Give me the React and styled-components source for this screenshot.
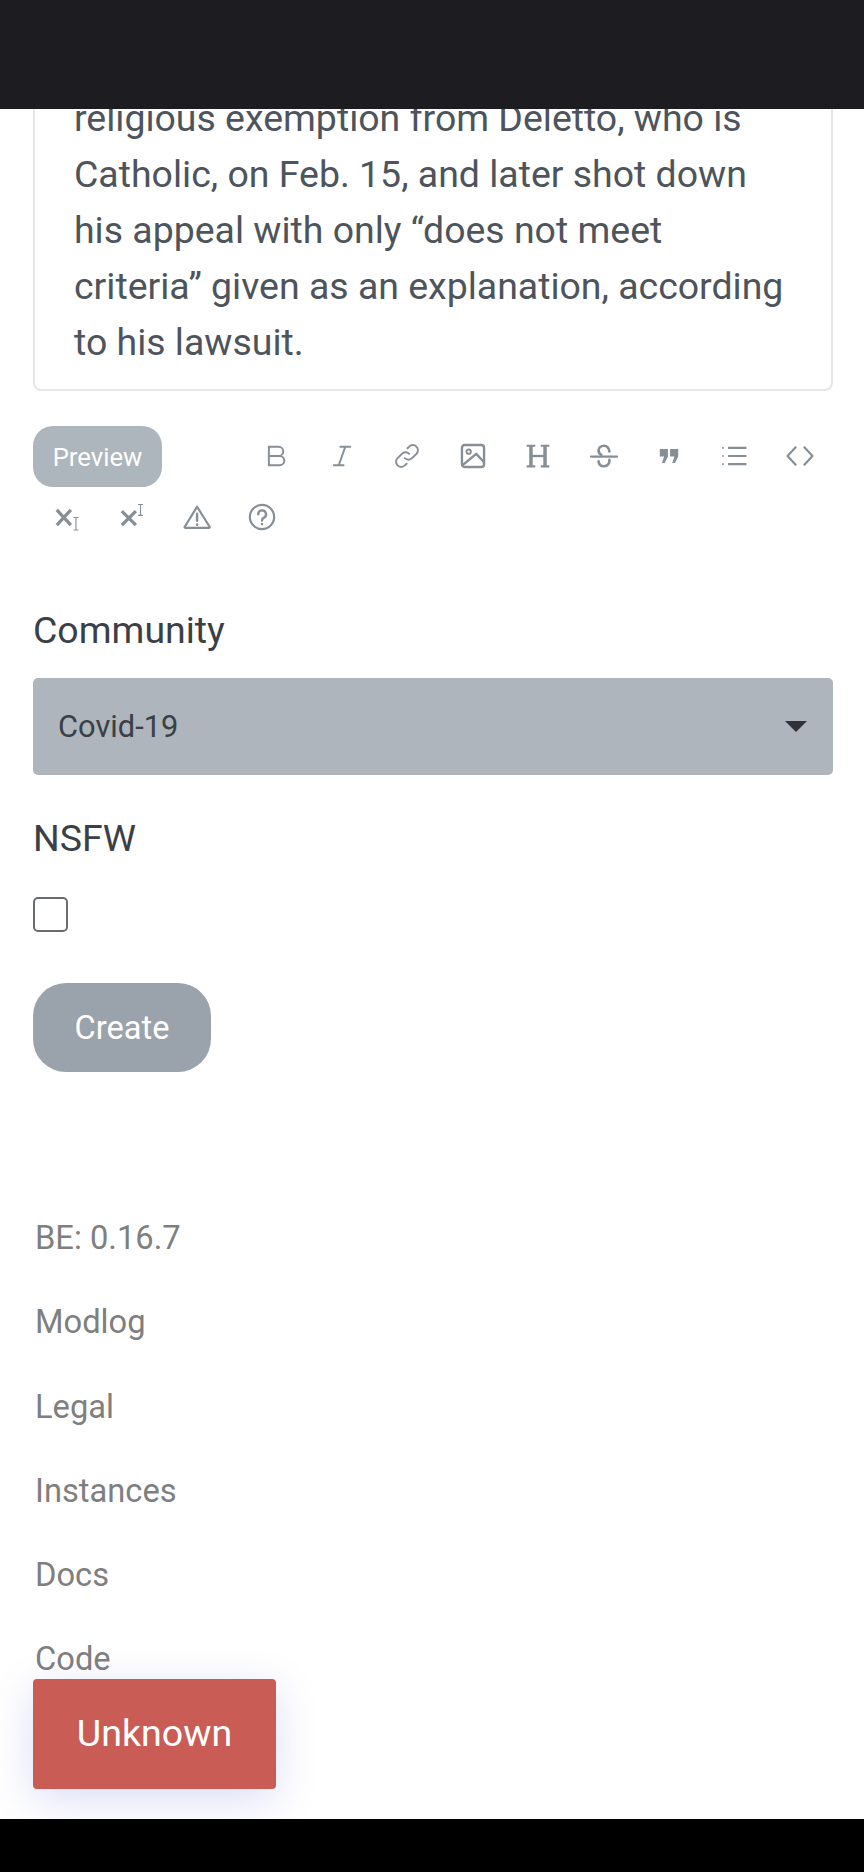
import React from 'react';
import styled, { createGlobalStyle } from 'styled-components';

const GlobalStyle = createGlobalStyle`
  html, body {
    margin: 0;
    padding: 0;
    background: #fff;
  }

  * {
    box-sizing: border-box;
  }
`

const Phone = styled.div`
  display: flex;
  flex-direction: column;
  width: 864px;
  height: 1872px;
  overflow: hidden;
  font-family: Roboto, "Liberation Sans", sans-serif;
`

const StatusBar = styled.div`
  flex: 0 0 109px;
  background: #1c1c21;
`

const NavBar = styled.div`
  flex: 0 0 53px;
  background: #000;
`

const Viewport = styled.main`
  position: relative;
  flex: 1;
  overflow: hidden;
  background: #fff;
`

const Scrolled = styled.div`
  margin-top: -20px;
  padding: 0 31px 0 33px;
`

const Card = styled.div`
  padding: 1px 30px 19px 39px;
  border: 2px solid #e4e6e8;
  border-top: 0;
  border-radius: 0 0 8px 8px;
  color: #4d545b;
  font-size: 37.45px;
  line-height: 56px;
  white-space: nowrap;
`

const Toolbar = styled.div`
  display: flex;
  flex-wrap: wrap;
  align-items: flex-start;
  margin-top: 35px;
`

const PreviewButton = styled.button`
  width: 129px;
  height: 61px;
  margin-right: 82px;
  padding: 0;
  border: 0;
  border-radius: 20px;
  background: #adb5bd;
  color: #fff;
  font-family: inherit;
  font-size: 25.7px;
`

const ToolButton = styled.button`
  display: flex;
  align-items: center;
  justify-content: center;
  width: 65.4px;
  height: 60px;
  padding: 0;
  border: 0;
  background: transparent;
  color: #868e96;

  svg {
    display: block;
    width: 26px;
    height: 26px;
    overflow: visible;
    fill: none;
    stroke: currentColor;
    stroke-width: 1.8;
    stroke-linecap: round;
    stroke-linejoin: round;
  }
`

const Label = styled.label`
  display: block;
  margin-top: ${(p) => p.$top}px;
  color: #3a4046;
  font-size: 37.45px;
  line-height: 50px;
`

const Select = styled.div`
  display: flex;
  align-items: center;
  justify-content: space-between;
  height: 97px;
  margin-top: 23px;
  padding: 0 26px 0 25px;
  border-radius: 5px;
  background: #aeb5bd;
  color: #3a4046;
  font-size: 30.8px;
`

const Caret = styled.span`
  width: 0;
  height: 0;
  border-top: 11px solid #2f3338;
  border-left: 11px solid transparent;
  border-right: 11px solid transparent;
`

const Checkbox = styled.div`
  width: 35px;
  height: 35px;
  margin-top: 34px;
  border: 2px solid #6a6d70;
  border-radius: 5px;
  background: #fff;
`

const CreateButton = styled.button`
  display: block;
  width: 178px;
  height: 89px;
  margin-top: 51px;
  padding: 0;
  border: 0;
  border-radius: 33px;
  background: #9aa2ab;
  color: #fff;
  font-family: inherit;
  font-size: 32.6px;
`

const FooterNav = styled.nav`
  margin-top: 124px;
  padding-left: 2px;
`

const FooterItem = styled.div`
  height: 84.3px;
  color: #7f7f7f;
  font-size: 32.7px;
  line-height: 84.3px;
`

const Toast = styled.div`
  position: absolute;
  left: 33px;
  bottom: 30px;
  width: 243px;
  height: 110px;
  border-radius: 4px;
  background: #c95d56;
  box-shadow: 0 10px 40px rgba(90, 100, 210, 0.22);
  color: #fff;
  font-size: 37.6px;
  line-height: 108px;
  text-align: center;
`

const tools = [
  <><path d="M4.5 3.5h9a4.2 4.2 0 0 1 0 8.5h-9zM4.5 12h10a4.2 4.2 0 0 1 0 8.5h-10z" /></>,
  <><path d="M10.5 3.5h9M4.5 20.5h9M15 3.5L9 20.5" /></>,
  <><path d="M10 14a4.7 4.7 0 0 0 6.7 0l4-4a4.7 4.7 0 0 0-6.7-6.7l-1.6 1.6" /><path d="M14 10a4.7 4.7 0 0 0-6.7 0l-4 4a4.7 4.7 0 0 0 6.7 6.7l1.6-1.6" /></>,
  <><rect x="1.8" y="1.8" width="20.4" height="20.4" rx="2.5" strokeWidth="2.2" /><circle cx="8" cy="8" r="2" /><path d="M3 20l12-10 7 7.5" strokeWidth="2.2" /></>,
  <><path d="M1.5 2.5h8M1.5 21.5h8M14.5 2.5h8M14.5 21.5h8" strokeWidth="2" strokeLinecap="butt" /><path d="M5.5 2.5v19M18.5 2.5v19" strokeWidth="3.2" strokeLinecap="butt" /><path d="M5.5 12h13" strokeWidth="2.2" strokeLinecap="butt" /></>,
  <><path d="M0 12.5h24" strokeWidth="2" /><path d="M17 7.8C16.5 4.5 14.5 2.5 12 2.5S7 4.2 7 7c0 1.8 1 3.2 2.5 4M17 15.5c.5 3.5-2 6-5 6s-4.8-1.8-5-4.5" strokeWidth="2.4" /></>,
  <><path d="M3.5 5.5h7.5v7l-3 6H5.5l2-6h-4zM13 5.5h7.5v7l-3 6H15l2-6h-4z" fill="currentColor" stroke="none" /></>,
  <><path d="M6.5 4.5h17M6.5 12h17M6.5 19.5h17" strokeWidth="2" strokeLinecap="butt" /><path d="M1 4.5h1.5M1 12h1.5M1 19.5h1.5" strokeWidth="1.6" strokeLinecap="butt" /></>,
  <><path d="M8 4L.5 12 8 20M16 4l7.5 8-7.5 8" strokeWidth="2" /></>,
  <><path d="M3.5 5.5l13 14M16.5 5.5l-13 14" strokeWidth="3" strokeLinecap="butt" /><path d="M19 12.5h4.5M19 24h4.5M21.2 12.5V24" strokeWidth="1" strokeLinecap="butt" /></>,
  <><path d="M3.5 6.5l13 13M16.5 6.5l-13 13" strokeWidth="3" strokeLinecap="butt" /><path d="M18.5 .5h4.5M18.5 10.5h4.5M20.8 .5v10" strokeWidth="1" strokeLinecap="butt" /></>,
  <><path d="M13 2.5L1.5 21.2a.6.6 0 0 0 .5.8h22.2a.6.6 0 0 0 .5-.8z" strokeWidth="2" /><path d="M13 9v6.5M13 18.8v.3" strokeWidth="2.2" /></>,
  <><circle cx="12" cy="12" r="11.2" strokeWidth="2" /><path d="M8.5 9.5a3.6 3.6 0 1 1 5.4 3.1c-1.2.7-1.9 1.3-1.9 2.6M12 18.3v.3" strokeWidth="2.2" /></>,
]

const footerLinks = ['BE: 0.16.7', 'Modlog', 'Legal', 'Instances', 'Docs', 'Code']

const App = () => {
  return (
    <Phone>
      <GlobalStyle />
      <StatusBar />
      <Viewport>
        <Scrolled>
          <Card>
            religious exemption from Deletto, who is<br />
            Catholic, on Feb. 15, and later shot down<br />
            his appeal with only “does not meet<br />
            criteria” given as an explanation, according<br />
            to his lawsuit.
          </Card>
          <Toolbar>
            <PreviewButton>Preview</PreviewButton>
            {tools.map((icon, i) => (
              <ToolButton key={i}>
                <svg viewBox="0 0 24 24">{icon}</svg>
              </ToolButton>
            ))}
          </Toolbar>
          <Label $top={58}>Community</Label>
          <Select>
            Covid-19
            <Caret />
          </Select>
          <Label $top={38}>NSFW</Label>
          <Checkbox />
          <CreateButton>Create</CreateButton>
          <FooterNav>
            {footerLinks.map((link) => (
              <FooterItem key={link}>{link}</FooterItem>
            ))}
          </FooterNav>
        </Scrolled>
        <Toast>Unknown</Toast>
      </Viewport>
      <NavBar />
    </Phone>
  )
}

export default App
